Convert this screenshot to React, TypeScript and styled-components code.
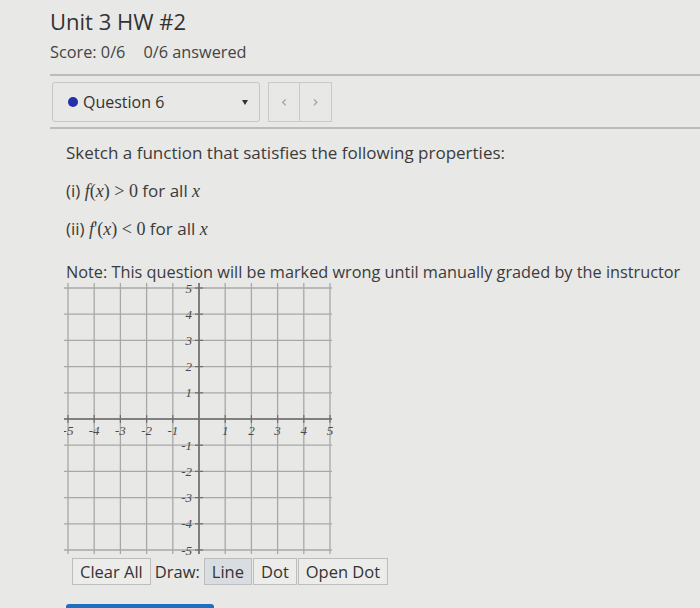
import styled, { createGlobalStyle } from "styled-components"

const GlobalStyle = createGlobalStyle`
    body{
        margin: 0;
        background: #e8e8e6;
        font-family: "Open Sans", "Liberation Sans", sans-serif;
        color: #3b3b3b;
    }
`

// GRAPH // // GRAPH // // GRAPH //
const STEP = 26.2
const gx = (v: number) => 4 + STEP * (v + 5)
const gy = (v: number) => 5 + STEP * (5 - v)
const UNITS = [-5, -4, -3, -2, -1, 0, 1, 2, 3, 4, 5]

const Graph = () => {
    return (
        <GraphSvg width="270" height="275" viewBox="0 0 270 275">
            {UNITS.map((v) => (
                <line key={"v" + v} x1={gx(v)} x2={gx(v)} y1={0} y2={271} stroke="#a8a8a8" strokeWidth="1.3" />
            ))}
            {UNITS.map((v) => (
                <line key={"h" + v} x1={0} x2={268} y1={gy(v)} y2={gy(v)} stroke="#a8a8a8" strokeWidth="1.3" />
            ))}
            <line x1={gx(0)} x2={gx(0)} y1={0} y2={271} stroke="#6e6e6e" strokeWidth="1.6" />
            <line x1={0} x2={268} y1={gy(0)} y2={gy(0)} stroke="#6e6e6e" strokeWidth="1.6" />
            {UNITS.filter((v) => v !== 0).map((v) => (
                <g key={"t" + v}>
                    <line x1={gx(v)} x2={gx(v)} y1={gy(0) - 4} y2={gy(0) + 4} stroke="#6e6e6e" strokeWidth="1.2" />
                    <line x1={gx(0) - 4} x2={gx(0) + 4} y1={gy(v)} y2={gy(v)} stroke="#6e6e6e" strokeWidth="1.2" />
                    <AxisLabel x={gx(v)} y={gy(0) + 16} textAnchor="middle">{v}</AxisLabel>
                    <AxisLabel x={gx(0) - 7} y={gy(v) + 4.5} textAnchor="end">{v}</AxisLabel>
                </g>
            ))}
        </GraphSvg>
    )
}

// COMPONENT // // COMPONENT // // COMPONENT //
const App = () => {
    return (
        <Page>
            <GlobalStyle />
            <Title>Unit 3 HW #2</Title>
            <ScoreLine>
                <span>Score: 0/6</span>
                <span>0/6 answered</span>
            </ScoreLine>
            <Rule />
            <NavRow>
                <QuestionSelect>
                    <Bullet />
                    <span>Question 6</span>
                    <Caret />
                </QuestionSelect>
                <NavGroup>
                    <NavButton>&#8249;</NavButton>
                    <NavButton>&#8250;</NavButton>
                </NavGroup>
            </NavRow>
            <Rule $after />
            <Question>
                <Para>Sketch a function that satisfies the following properties:</Para>
                <Para>
                    (i) <MathVar>f</MathVar><MathSym>(</MathSym><MathVar>x</MathVar><MathSym>)</MathSym>
                    <MathSym> &gt; 0</MathSym> for all <MathVar>x</MathVar>
                </Para>
                <Para>
                    (ii) <MathVar>f</MathVar><MathSym>'(</MathSym><MathVar>x</MathVar><MathSym>)</MathSym>
                    <MathSym> &lt; 0</MathSym> for all <MathVar>x</MathVar>
                </Para>
                <Note>Note: This question will be marked wrong until manually graded by the instructor</Note>
                <Graph />
                <ToolRow>
                    <ToolButton>Clear All</ToolButton>
                    <DrawLabel>Draw:</DrawLabel>
                    <ToolGroup>
                        <ToolButton $active>Line</ToolButton>
                        <ToolButton>Dot</ToolButton>
                        <ToolButton>Open Dot</ToolButton>
                    </ToolGroup>
                </ToolRow>
                <SubmitButton />
            </Question>
        </Page>
    )
}

export default App

// STYLESHEET // // STYLESHEET // // STYLESHEET //
const Page = styled.main`
    padding: 6px 0 0 50px;
    overflow: hidden;
    height: 602px;
`

const Title = styled.h1`
    margin: 0;
    font-size: 22px;
    font-weight: 400;
    color: #333;
`

const ScoreLine = styled.div`
    display: flex;
    gap: 18px;
    margin-top: 5px;
    font-size: 16.3px;
    color: #444;
`

const Rule = styled.hr<{ $after?: boolean }>`
    margin: ${({ $after }) => ($after ? "5px" : "11px")} 0 0 0;
    border: none;
    border-top: 2px solid #bcbcbc;
`

const NavRow = styled.div`
    display: flex;
    gap: 8px;
    margin: 6px 0 0 2px;
    height: 40px;
`

const QuestionSelect = styled.div`
    width: 208px;
    box-sizing: border-box;
    display: flex;
    align-items: center;
    gap: 5px;
    padding: 0 10px 0 15px;
    border: 1.5px solid #c6c6c6;
    border-radius: 3px;
    font-size: 16px;
    color: #333;
`

const Bullet = styled.span`
    width: 10px;
    height: 10px;
    border-radius: 50%;
    background: #2430a8;
`

const Caret = styled.span`
    margin-left: auto;
    margin-right: 1px;
    width: 0;
    height: 0;
    border-left: 3px solid transparent;
    border-right: 3px solid transparent;
    border-top: 5px solid #333;
`

const NavGroup = styled.div`
    display: flex;
`

const NavButton = styled.div`
    width: 32px;
    box-sizing: border-box;
    display: flex;
    align-items: center;
    justify-content: center;
    border: 1.5px solid #c9c9c9;
    font-family: "DejaVu Sans", sans-serif;
    font-size: 15px;
    color: #9a9a9a;
    & + &{
        border-left: none;
    }
`

const Question = styled.section`
    padding: 13px 0 0 16px;
`

const Para = styled.p`
    margin: 0 0 16px 0;
    font-size: 17px;
    line-height: 22px;
    white-space: nowrap;
`

const Note = styled(Para)`
    margin: 21px 0 0 0;
    font-size: 16.3px;
`

const MathVar = styled.i`
    font-family: "Liberation Serif", "DejaVu Serif", serif;
    font-size: 18px;
`

const MathSym = styled.span`
    font-family: "Liberation Serif", "DejaVu Serif", serif;
    font-size: 18px;
`

const GraphSvg = styled.svg`
    display: block;
    margin: 0 0 0 -2px;
`

const AxisLabel = styled.text`
    font-family: "Liberation Serif", serif;
    font-style: italic;
    font-size: 13px;
    fill: #4a4a4a;
`

const ToolRow = styled.div`
    display: flex;
    align-items: center;
    gap: 4px;
    margin: 0 0 0 6px;
`

const ToolGroup = styled.div`
    display: flex;
    gap: 1px;
`

const ToolButton = styled.div<{ $active?: boolean }>`
    height: 27px;
    box-sizing: border-box;
    display: flex;
    align-items: center;
    padding: 0 7px;
    border: 1.5px solid #bdbdbd;
    background: ${({ $active }) => ($active ? "#d9dde2" : "#ececea")};
    font-size: 16.5px;
    color: #333;
`

const DrawLabel = styled.span`
    font-size: 16.5px;
    color: #333;
`

const SubmitButton = styled.div`
    margin-top: 19px;
    width: 148px;
    height: 30px;
    border-radius: 3px;
    background: #1f6ec0;
`
